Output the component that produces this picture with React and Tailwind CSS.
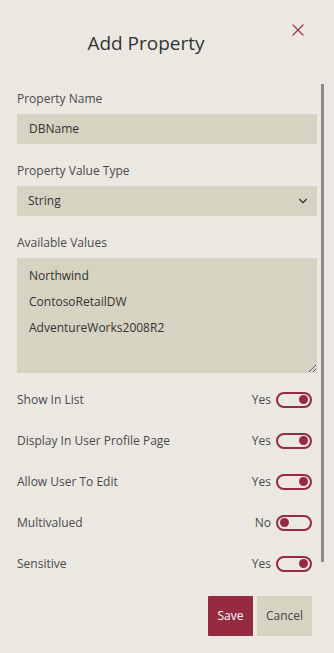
import React from "react";
import { ChevronDown, X } from "lucide-react";

const toggles = [
  { label: "Show In List", on: true },
  { label: "Display In User Profile Page", on: true },
  { label: "Allow User To Edit", on: true },
  { label: "Multivalued", on: false },
  { label: "Sensitive", on: true },
];

const Toggle = ({ on }) => (
  <div
    className={`flex items-center w-[36px] h-[16px] rounded-full border-2 border-[#962a41] px-[2px] ${
      on ? "justify-end" : "justify-start"
    }`}
  >
    <div className="w-[9px] h-[9px] rounded-full bg-[#962a41]" />
  </div>
);

const Label = ({ children }) => (
  <div className="text-[12px] leading-[16px] text-[#4a4a4a]">{children}</div>
);

export default function App() {
  return (
    <div
      className="w-[334px] h-[653px] bg-[#ebe8e1] flex flex-col text-[#333]"
      style={{ fontFamily: '"Open Sans", "Noto Sans", sans-serif' }}
    >
      {/* header */}
      <div className="flex h-[84px] shrink-0">
        <div className="w-[292px] pt-[30px] text-center text-[19px] leading-[26px] text-[#333]">
          Add Property
        </div>
        <div className="pt-[20px] -ml-[4px]">
          <X size={20} strokeWidth={1.5} className="text-[#9b3a4f]" />
        </div>
      </div>

      {/* body */}
      <div className="flex flex-1 min-h-0">
        <div className="w-[300px] ml-[17px] flex flex-col pt-[7px]">
          <Label>Property Name</Label>
          <div className="mt-[7px] h-[30px] bg-[#d6d3c2] px-3 flex items-center text-[12px] text-[#333]">
            DBName
          </div>

          <div className="mt-[19px]">
            <Label>Property Value Type</Label>
          </div>
          <div className="mt-[7px] h-[30px] bg-[#d6d3c2] pl-[11px] pr-[7px] flex items-center justify-between text-[12px] text-[#333]">
            <span>String</span>
            <ChevronDown size={14} strokeWidth={2} className="text-[#333]" />
          </div>

          <div className="mt-[19px]">
            <Label>Available Values</Label>
          </div>
          <textarea
            readOnly
            defaultValue={"Northwind\nContosoRetailDW\nAdventureWorks2008R2"}
            className="mt-[7px] h-[115px] bg-[#d6d3c2] px-3 pt-[5px] text-[12px] leading-[26px] text-[#333] outline-none resize-y"
          />

          <div className="mt-[6px] flex flex-col">
            {toggles.map((t) => (
              <div
                key={t.label}
                className="h-[41px] flex items-center justify-between pr-[5px]"
              >
                <span className="text-[12px] text-[#4a4a4a]">{t.label}</span>
                <div className="flex items-center gap-[5px]">
                  <span className="text-[12px] text-[#4a4a4a]">
                    {t.on ? "Yes" : "No"}
                  </span>
                  <Toggle on={t.on} />
                </div>
              </div>
            ))}
          </div>
        </div>
        <div className="ml-[4px] w-[3px]">
          <div className="h-[478px] w-[3px] bg-[#8a8a8a]" />
        </div>
      </div>

      {/* footer */}
      <div className="flex justify-end gap-[4px] pr-[22px] pb-[17px] shrink-0">
        <button className="w-[45px] h-[40px] bg-[#962a41] text-white text-[12px] rounded-[1px]">
          Save
        </button>
        <button className="w-[55px] h-[40px] bg-[#d6d3c2] text-[#444] text-[12px]">
          Cancel
        </button>
      </div>
    </div>
  );
}
